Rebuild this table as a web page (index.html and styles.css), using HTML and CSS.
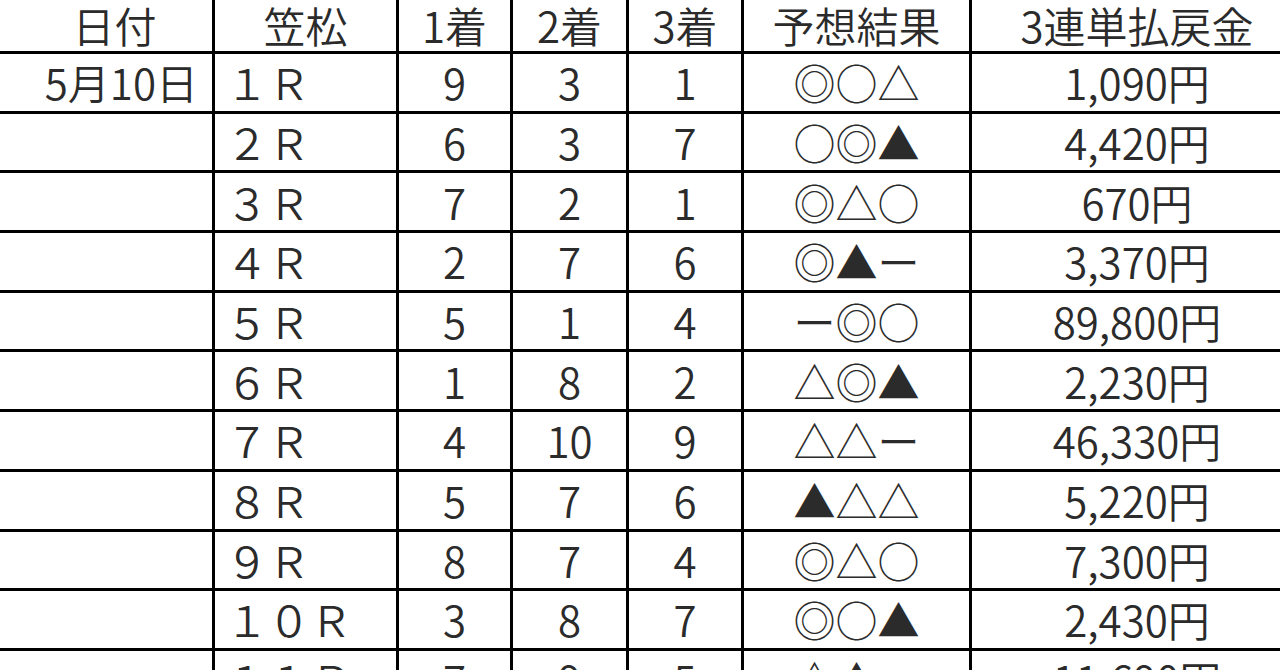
FILE: index.html
```html
<!DOCTYPE html>
<html lang="ja">
<head>
<meta charset="utf-8">
<title>笠松 結果</title>
<link rel="stylesheet" href="styles.css">
</head>
<body>
<div class="sheet">
  <div class="grid">
    <div class="c h date-h">日付</div><div class="c h">笠松</div><div class="c h">1着</div><div class="c h">2着</div><div class="c h">3着</div><div class="c h">予想結果</div><div class="c h">3連単払戻金</div>

    <div class="c date">5月10日</div><div class="c race">１Ｒ</div><div class="c">9</div><div class="c">3</div><div class="c">1</div><div class="c sym">◎○△</div><div class="c">1,090円</div>
    <div class="c date"></div><div class="c race">２Ｒ</div><div class="c">6</div><div class="c">3</div><div class="c">7</div><div class="c sym">○◎▲</div><div class="c">4,420円</div>
    <div class="c date"></div><div class="c race">３Ｒ</div><div class="c">7</div><div class="c">2</div><div class="c">1</div><div class="c sym">◎△○</div><div class="c">670円</div>
    <div class="c date"></div><div class="c race">４Ｒ</div><div class="c">2</div><div class="c">7</div><div class="c">6</div><div class="c sym">◎▲ー</div><div class="c">3,370円</div>
    <div class="c date"></div><div class="c race">５Ｒ</div><div class="c">5</div><div class="c">1</div><div class="c">4</div><div class="c sym">ー◎○</div><div class="c">89,800円</div>
    <div class="c date"></div><div class="c race">６Ｒ</div><div class="c">1</div><div class="c">8</div><div class="c">2</div><div class="c sym">△◎▲</div><div class="c">2,230円</div>
    <div class="c date"></div><div class="c race">７Ｒ</div><div class="c">4</div><div class="c">10</div><div class="c">9</div><div class="c sym">△△ー</div><div class="c">46,330円</div>
    <div class="c date"></div><div class="c race">８Ｒ</div><div class="c">5</div><div class="c">7</div><div class="c">6</div><div class="c sym">▲△△</div><div class="c">5,220円</div>
    <div class="c date"></div><div class="c race">９Ｒ</div><div class="c">8</div><div class="c">7</div><div class="c">4</div><div class="c sym">◎△○</div><div class="c">7,300円</div>
    <div class="c date"></div><div class="c race">１０Ｒ</div><div class="c">3</div><div class="c">8</div><div class="c">7</div><div class="c sym">◎○▲</div><div class="c">2,430円</div>
    <div class="c date"></div><div class="c race">１１Ｒ</div><div class="c">7</div><div class="c">9</div><div class="c">5</div><div class="c sym">△▲ー</div><div class="c">11,690円</div>
  </div>
</div>
</body>
</html>
```

FILE: styles.css
```css
html, body {
  margin: 0;
  padding: 0;
  background: #ffffff;
}
body {
  width: 1280px;
  height: 670px;
  overflow: hidden;
}
.sheet {
  width: 1280px;
  height: 670px;
  overflow: hidden;
}
.grid {
  display: grid;
  grid-template-columns: 212px 181px 111px 113px 112px 225px 330px;
  grid-template-rows: 51px repeat(11, 56.7px);
  gap: 3px;
  background: #000000;
  width: 1300px;
  font-family: "Noto Sans CJK JP", "Noto Sans", sans-serif;
  font-weight: 350;
  font-size: 42px;
  color: #2b2b2b;
}
.c {
  background: #ffffff;
  display: flex;
  align-items: center;
  justify-content: center;
  line-height: 1.15;
  white-space: nowrap;
}
.date-h {
  padding-left: 17px;
}
.date {
  justify-content: flex-end;
  padding-right: 14px;
}
.race {
  justify-content: flex-start;
  padding-left: 11px;
}
```
